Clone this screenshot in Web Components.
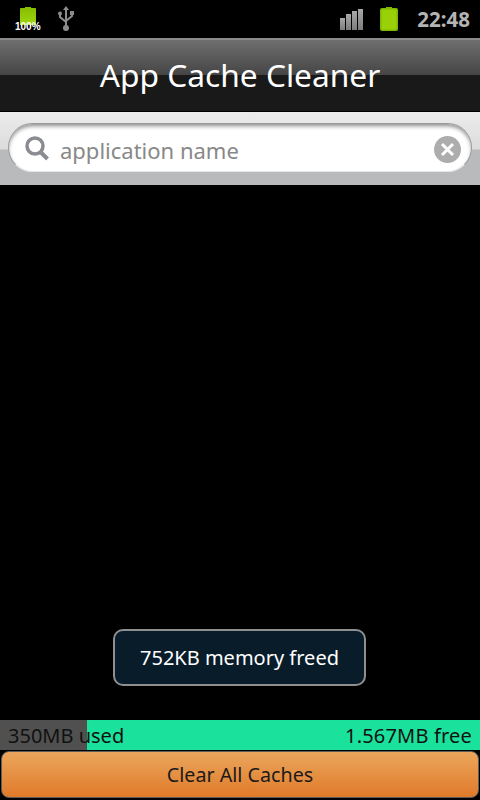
<!DOCTYPE html>
<html>
<head>
<meta charset="utf-8">
<title>App Cache Cleaner</title>
<style>
  html, body { margin: 0; height: 100%; background: #000; }
  body { font-family: "Noto Sans", "Open Sans", sans-serif; }
  app-screen { height: 800px; }
</style>
</head>
<body>
<app-screen>
  <status-bar slot="status" time="22:48"></status-bar>
  <title-bar slot="title">App Cache Cleaner</title-bar>
  <search-box slot="search" placeholder="application name"></search-box>
  <toast-message slot="toast">752KB memory freed</toast-message>
  <memory-meter slot="meter" used="350MB used" free="1.567MB free" percent="18.1"></memory-meter>
  <action-button slot="action">Clear All Caches</action-button>
</app-screen>

<script>
'use strict';

class AppScreen extends HTMLElement {
  constructor() {
    super();
    this.attachShadow({ mode: 'open' }).innerHTML = `
      <style>
        :host { display: flex; flex-direction: column; position: relative; width: 480px; background: #000; overflow: hidden; }
        main { flex: 1; }
        .toast { position: absolute; left: 0; right: 1px; top: 629px; display: flex; justify-content: center; }
      </style>
      <slot name="status"></slot>
      <slot name="title"></slot>
      <slot name="search"></slot>
      <main></main>
      <div class="toast"><slot name="toast"></slot></div>
      <slot name="meter"></slot>
      <slot name="action"></slot>
    `;
  }
}

class StatusBar extends HTMLElement {
  constructor() {
    super();
    this.attachShadow({ mode: 'open' }).innerHTML = `
      <style>
        :host { display: flex; align-items: flex-start; height: 38px; background: #000; }
        .left { position: relative; width: 58px; height: 38px; flex: none; }
        .left svg { position: absolute; left: 20px; top: 7px; }
        .pct { position: absolute; left: 15px; top: 21px; font: bold 10px/12px "Liberation Sans", sans-serif; color: #fff; }
        .usb { margin-top: 6px; flex: none; }
        .fill { flex: 1; }
        .bars { margin-top: 9px; flex: none; }
        .batt { margin: 7px 0 0 17px; flex: none; }
        .time { margin: 7px 10px 0 19px; font: bold 20.500px/24px "Noto Sans", sans-serif; color: #b4b4b4; }
      </style>
      <div class="left">
        <svg width="16" height="18" viewBox="0 0 16 18">
          <defs>
            <linearGradient id="g" x1="0" y1="0" x2="0" y2="1">
              <stop offset="0" stop-color="#86bc00"/>
              <stop offset="1" stop-color="#a0d810"/>
            </linearGradient>
          </defs>
          <path d="M5 0h6v1h4a1 1 0 0 1 1 1v16H0V2a1 1 0 0 1 1-1h4z" fill="url(#g)"/>
        </svg>
        <span class="pct">100%</span>
      </div>
      <svg class="usb" width="16" height="25" viewBox="0 0 16 25">
        <g fill="none" stroke="#8c8c8c" stroke-width="2">
          <path d="M8 3v18"/>
          <path d="M2 8v3l6 5"/>
          <path d="M14 7v3l-6 5"/>
        </g>
        <path d="M8 0l3 4H5z" fill="#8c8c8c"/>
        <circle cx="2" cy="7.500" r="2" fill="#8c8c8c"/>
        <rect x="12" y="5" width="4" height="4" fill="#8c8c8c"/>
        <circle cx="8" cy="22" r="3" fill="#8c8c8c"/>
      </svg>
      <div class="fill"></div>
      <svg class="bars" width="23" height="21" viewBox="0 0 23 21">
        <defs>
          <linearGradient id="b" x1="0" y1="0" x2="0" y2="1">
            <stop offset="0" stop-color="#a8a8a8"/>
            <stop offset="1" stop-color="#7c7c7c"/>
          </linearGradient>
        </defs>
        <rect x="0" y="9" width="5" height="12" fill="url(#b)"/>
        <rect x="6" y="5" width="5" height="16" fill="url(#b)"/>
        <rect x="12" y="2" width="5" height="19" fill="url(#b)"/>
        <rect x="18" y="0" width="5" height="21" fill="url(#b)"/>
      </svg>
      <svg class="batt" width="18" height="24" viewBox="0 0 18 24">
        <path d="M6 0h6v1h4a2 2 0 0 1 2 2v19a2 2 0 0 1-2 2H2a2 2 0 0 1-2-2V3a2 2 0 0 1 2-2h4z" fill="#7fb800"/>
        <rect x="1.500" y="2.500" width="15" height="20" rx="1" fill="#9ad008"/>
      </svg>
      <span class="time">${this.getAttribute('time')}</span>
    `;
  }
}

class TitleBar extends HTMLElement {
  constructor() {
    super();
    this.attachShadow({ mode: 'open' }).innerHTML = `
      <style>
        :host {
          display: flex; justify-content: center; align-items: center; box-sizing: border-box;
          height: 74px; padding-bottom: 3px; color: #fff;
          font: 31.700px "Noto Sans", sans-serif;
          border-top: 2px solid #8a8a8a;
          background: linear-gradient(#6f6f6f 0, #454545 35px, #191919 35px, #191919 100%);
          box-shadow: inset 0 -1px 0 #000;
        }
      </style>
      <slot></slot>
    `;
  }
}

class SearchBox extends HTMLElement {
  constructor() {
    super();
    this.attachShadow({ mode: 'open' }).innerHTML = `
      <style>
        :host {
          display: block; box-sizing: border-box; height: 73px; padding: 11px 8px 13px;
          background: linear-gradient(#ececec 0, #dcdcdc 37px, #b9babc 38px, #b9babc 100%);
        }
        .field {
          display: flex; align-items: center; box-sizing: border-box; height: 49px;
          padding: 4px 10px 0 16px;
          border-radius: 25px; background: #fff;
          border: 1px solid #9a9a9a; border-bottom-color: #e8e8e8;
          box-shadow: inset 0 3px 4px -1px #8a8a8a;
        }
        svg { flex: none; }
        .glass { margin-top: -2px; }
        span { flex: 1; margin-left: 11px; font: 22px "Noto Sans", sans-serif; color: #888; }
      </style>
      <div class="field">
        <svg class="glass" width="24" height="25" viewBox="0 0 24 25">
          <circle cx="10" cy="10" r="8" fill="none" stroke="#8a8c92" stroke-width="3.500"/>
          <path d="M15.500 16l7 7" stroke="#8a8c92" stroke-width="4" fill="none"/>
        </svg>
        <span>${this.getAttribute('placeholder')}</span>
        <svg width="27" height="27" viewBox="0 0 27 27">
          <circle cx="13.500" cy="13.500" r="13.500" fill="#adadad"/>
          <path d="M8 8l11 11M19 8L8 19" stroke="#fff" stroke-width="3" fill="none"/>
        </svg>
      </div>
    `;
  }
}

class ToastMessage extends HTMLElement {
  constructor() {
    super();
    this.attachShadow({ mode: 'open' }).innerHTML = `
      <style>
        :host {
          display: flex; align-items: center; justify-content: center; box-sizing: border-box;
          width: 253px; height: 57px; border: 2px solid #8f8f8f; border-radius: 10px;
          background: #081c2a; color: #fff; font: 20px "Noto Sans", sans-serif;
        }
      </style>
      <slot></slot>
    `;
  }
}

class MemoryMeter extends HTMLElement {
  constructor() {
    super();
    const pct = this.getAttribute('percent');
    this.attachShadow({ mode: 'open' }).innerHTML = `
      <style>
        :host {
          display: flex; justify-content: space-between; align-items: center; box-sizing: border-box;
          height: 30px; padding: 0 8px; color: #111; font: 20px "Noto Sans", sans-serif;
          background: linear-gradient(90deg, #505050 ${pct}%, #1ae29c ${pct}%);
        }
        .free { letter-spacing: 0.180px; }
      </style>
      <span>${this.getAttribute('used')}</span>
      <span class="free">${this.getAttribute('free')}</span>
    `;
  }
}

class ActionButton extends HTMLElement {
  constructor() {
    super();
    this.attachShadow({ mode: 'open' }).innerHTML = `
      <style>
        :host { display: block; box-sizing: border-box; height: 50px; padding: 1px 1px 2px; background: #000; }
        button {
          display: block; box-sizing: border-box; width: 100%; height: 100%; padding: 0;
          border: 1px solid #5c5c5c; border-radius: 8px; color: #1a1a1a;
          background: linear-gradient(#eaa65c, #e07a2a);
          font: 19.700px "Noto Sans", sans-serif;
        }
      </style>
      <button><slot></slot></button>
    `;
  }
}

customElements.define('app-screen', AppScreen);
customElements.define('status-bar', StatusBar);
customElements.define('title-bar', TitleBar);
customElements.define('search-box', SearchBox);
customElements.define('toast-message', ToastMessage);
customElements.define('memory-meter', MemoryMeter);
customElements.define('action-button', ActionButton);
</script>
</body>
</html>
